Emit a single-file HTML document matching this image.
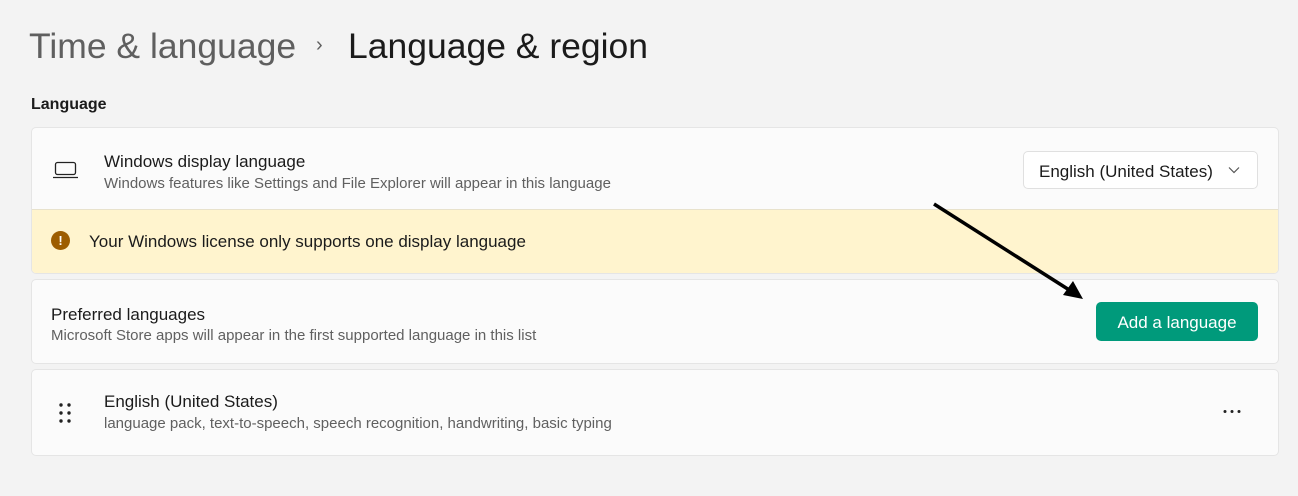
<!DOCTYPE html>
<html><head><style>
body{margin:0;width:1298px;height:496px;background:#f3f3f3;font-family:"Liberation Sans",sans-serif;position:relative;overflow:hidden;color:#1b1b1b}
.a{position:absolute;white-space:nowrap}
.card{position:absolute;left:31px;width:1248px;background:#fbfbfb;border:1px solid #e5e5e5;border-radius:5px;box-sizing:border-box}
.t{font-size:17px;color:#1b1b1b}
.s{font-size:15px;color:#606060}
</style></head><body>
<div class="a" style="left:29px;top:26px;font-size:35.5px;color:#5f5f5f">Time &amp; language</div>
<div class="a" style="left:316px;top:34px;font-size:20px;color:#5f5f5f">›</div>
<div class="a" style="left:348px;top:26px;font-size:35.5px;color:#1b1b1b">Language &amp; region</div>
<div class="a" style="left:31px;top:96px;font-size:16px;font-weight:bold">Language</div>

<div class="card" style="top:127px;height:147px;overflow:hidden">
 <div class="a" style="left:0;top:81px;width:100%;height:66px;background:#fff4ce;border-top:1px solid #e8e2cc"></div>
</div>
<svg class="a" style="left:53px;top:160px" width="26" height="20"><rect x="2.5" y="2.5" width="20" height="12" rx="2" fill="none" stroke="#222" stroke-width="1.3"/><line x1="0" y1="17.5" x2="25" y2="17.5" stroke="#222" stroke-width="1.3"/></svg>
<div class="a t" style="left:104px;top:152px">Windows display language</div>
<div class="a s" style="left:104px;top:175px">Windows features like Settings and File Explorer will appear in this language</div>
<div class="a" style="left:1023px;top:151px;width:235px;height:38px;box-sizing:border-box;background:#fff;border:1px solid #e0e0e0;border-radius:5px;font-size:17px;padding:10px 0 0 15px">English (United States)</div>
<svg class="a" style="left:1228px;top:166px" width="12" height="8"><path d="M1 1.5l5 5 5-5" fill="none" stroke="#555" stroke-width="1.2"/></svg>
<div class="a" style="left:51px;top:231px;width:19px;height:19px;border-radius:50%;background:#9d5d00;color:#fff;font-size:13px;font-weight:bold;text-align:center;line-height:19px">!</div>
<div class="a" style="left:89px;top:232px;font-size:17px">Your Windows license only supports one display language</div>

<div class="card" style="top:279px;height:85px"></div>
<div class="a t" style="left:51px;top:305px">Preferred languages</div>
<div class="a s" style="left:51px;top:327px">Microsoft Store apps will appear in the first supported language in this list</div>
<div class="a" style="left:1096px;top:302px;width:162px;height:39px;background:#009a7b;border-radius:5px;color:#fff;font-size:17px;text-align:center;line-height:41px">Add a language</div>

<div class="card" style="top:369px;height:87px"></div>
<svg class="a" style="left:58px;top:402px" width="16" height="22" fill="#222"><circle cx="3" cy="3" r="1.7"/><circle cx="11" cy="3" r="1.7"/><circle cx="3" cy="11" r="1.7"/><circle cx="11" cy="11" r="1.7"/><circle cx="3" cy="19" r="1.7"/><circle cx="11" cy="19" r="1.7"/></svg>
<div class="a t" style="left:104px;top:392px">English (United States)</div>
<div class="a s" style="left:104px;top:415px">language pack, text-to-speech, speech recognition, handwriting, basic typing</div>
<svg class="a" style="left:1222px;top:409px" width="20" height="5" fill="#222"><circle cx="3" cy="2.5" r="1.5"/><circle cx="10" cy="2.5" r="1.5"/><circle cx="17" cy="2.5" r="1.5"/></svg>

<svg class="a" style="left:0;top:0" width="1298" height="496"><line x1="934" y1="204" x2="1074" y2="293" stroke="#000" stroke-width="3.5"/><path d="M1083 299l-20-4 10-14z" fill="#000"/></svg>
</body></html>
